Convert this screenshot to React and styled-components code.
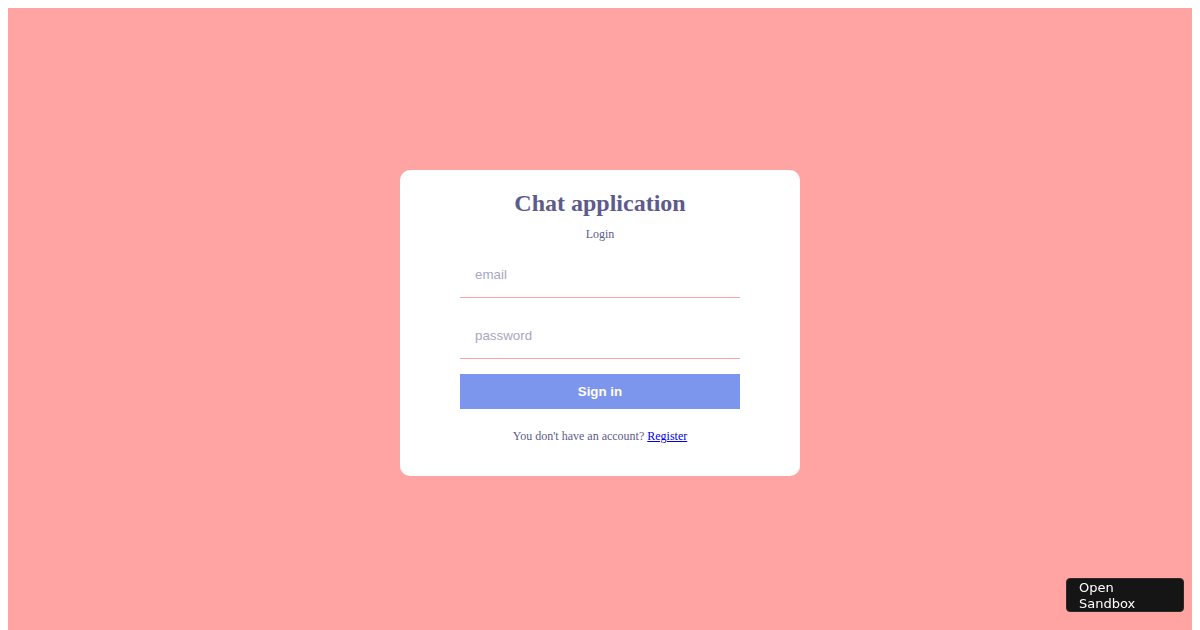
import React from "react";
import styled, { createGlobalStyle } from "styled-components";

const GlobalStyle = createGlobalStyle`
  body {
    margin: 8px;
    font-family: "Liberation Serif", "Times New Roman", serif;
  }
`;

const FormContainer = styled.div`
  background-color: #ffa4a2;
  height: 100vh;
  display: flex;
  align-items: center;
  justify-content: center;
`;

const FormWrapper = styled.div`
  background-color: #ffffff;
  padding: 20px 60px;
  border-radius: 10px;
  display: flex;
  flex-direction: column;
  gap: 10px;
  align-items: center;
`;

const Logo = styled.span`
  color: #5d5b8d;
  font-weight: bold;
  font-size: 24px;
`;

const Title = styled.span`
  color: #5d5b8d;
  font-size: 12px;
`;

const Form = styled.form`
  display: flex;
  flex-direction: column;
  gap: 15px;
`;

const Input = styled.input`
  padding: 15px;
  border: none;
  width: 250px;
  border-bottom: 1px solid #ffa4a2;
  font-family: "Liberation Sans", Arial, sans-serif;
  font-size: 13.333px;
  outline: none;
  &::placeholder {
    color: #a9a7bf;
  }
`;

const Button = styled.button`
  background-color: #7b96ec;
  color: #ffffff;
  padding: 10px;
  font-weight: bold;
  border: none;
  cursor: pointer;
  font-family: "Liberation Sans", Arial, sans-serif;
  font-size: 13.333px;
`;

const Footer = styled.p`
  color: #5d5b8d;
  font-size: 12px;
  margin-top: 10px;
  margin-bottom: 12px;
`;

const Link = styled.a`
  color: #0000ee;
  text-decoration: underline;
`;

const SandboxButton = styled.button`
  position: fixed;
  right: 16px;
  bottom: 18px;
  width: 118px;
  height: 34px;
  box-sizing: border-box;
  padding: 1px 12px;
  background: #151515;
  color: #ffffff;
  border: 1px solid #2a2a2a;
  border-radius: 4px;
  text-align: left;
  font-family: "DejaVu Sans", Verdana, sans-serif;
  font-size: 13px;
  line-height: 16px;
`;

export default function App() {
  return (
    <>
      <GlobalStyle />
      <FormContainer>
        <FormWrapper>
          <Logo>Chat application</Logo>
          <Title>Login</Title>
          <Form onSubmit={(e) => e.preventDefault()}>
            <Input type="email" placeholder="email" />
            <Input type="password" placeholder="password" />
            <Button type="submit">Sign in</Button>
          </Form>
          <Footer>
            You don't have an account? <Link href="#">Register</Link>
          </Footer>
        </FormWrapper>
      </FormContainer>
      <SandboxButton>Open Sandbox</SandboxButton>
    </>
  );
}
